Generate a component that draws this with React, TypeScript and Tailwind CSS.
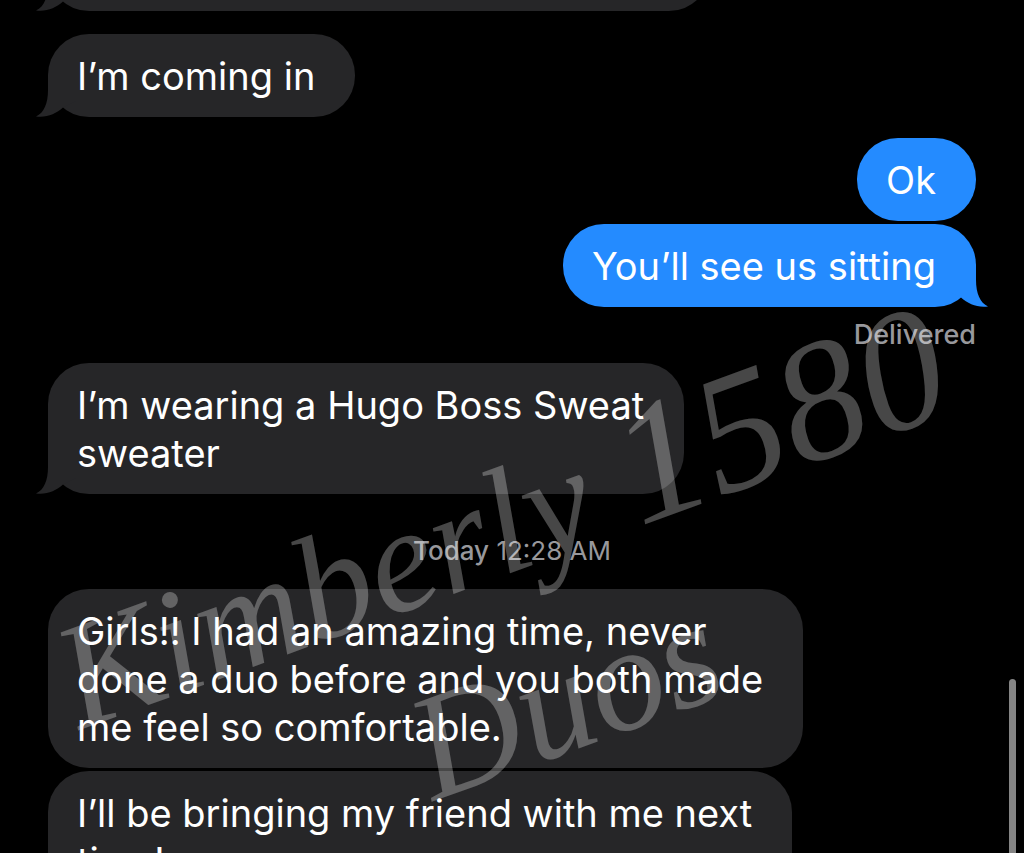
import React from "react";

type Side = "left" | "right";

function Tail({ side }: { side: Side }) {
  const place =
    side === "left"
      ? "-left-3 text-[#262628]"
      : "-right-3 -scale-x-100 text-[#248bff]";
  return (
    <svg
      aria-hidden="true"
      viewBox="0 0 42 41"
      className={`absolute bottom-0 h-[41px] w-[42px] ${place}`}
    >
      <path
        fill="currentColor"
        d="M12 0V14C12 27 8 37 0 40.4C10 42 20 38 27 31.5L42 24V0Z"
      />
    </svg>
  );
}

function Bubble({
  side,
  tail = false,
  children,
}: {
  side: Side;
  tail?: boolean;
  children: React.ReactNode;
}) {
  const look =
    side === "left"
      ? "self-start bg-[#262628]"
      : "self-end bg-[#248bff]";
  return (
    <div
      className={`relative shrink-0 rounded-[41px] pt-[18px] pr-10 pb-[17px] pl-[29px] ${look}`}
    >
      {tail && <Tail side={side} />}
      <p className="relative text-[38px] leading-[48px] whitespace-pre-line text-white">
        {children}
      </p>
    </div>
  );
}

export default function App() {
  return (
    <main className="relative flex h-screen flex-col overflow-hidden bg-black pr-12 pl-12 font-['Inter','Liberation_Sans',sans-serif]">
      <div className="relative -mt-[71px] h-[82px] w-[662px] max-w-full shrink-0 rounded-[41px] bg-[#262628]">
        <Tail side="left" />
      </div>

      <div className="mt-[23px] flex shrink-0 flex-col">
        <Bubble side="left" tail>
          I’m coming in
        </Bubble>
      </div>

      <div className="mt-[21px] flex shrink-0 flex-col gap-[3px]">
        <Bubble side="right">Ok</Bubble>
        <Bubble side="right" tail>
          You’ll see us sitting
        </Bubble>
      </div>
      <p className="mt-3 shrink-0 text-right text-[27px] leading-8 font-medium text-[#98989c]">
        Delivered
      </p>

      <div className="mt-3 flex shrink-0 flex-col">
        <Bubble side="left" tail>
          {"I’m wearing a Hugo Boss Sweat\nsweater"}
        </Bubble>
      </div>

      <p className="mt-[41px] shrink-0 text-center text-[26px] leading-8 text-[#98989c]">
        <span className="font-medium">Today</span> 12:28 AM
      </p>

      <div className="mt-[22px] flex shrink-0 flex-col gap-[3px]">
        <Bubble side="left">
          {"Girls!! I had an amazing time, never\ndone a duo before and you both made\nme feel so comfortable."}
        </Bubble>
        <Bubble side="left">
          {"I’ll be bringing my friend with me next\ntime!"}
        </Bubble>
      </div>

      <div className="pointer-events-none absolute top-[588px] left-7 origin-top-left -rotate-20 font-['Liberation_Serif','Times_New_Roman',serif] text-[150px] leading-[188px] whitespace-nowrap text-white/28 italic">
        <p>
          Kimberly <span className="text-[170px]">1580</span>
        </p>
        <p className="pl-[308px]">Duos</p>
      </div>

      <div className="absolute top-[679px] right-2 bottom-0 w-[7px] rounded-t-full bg-[#858585]" />
    </main>
  );
}
